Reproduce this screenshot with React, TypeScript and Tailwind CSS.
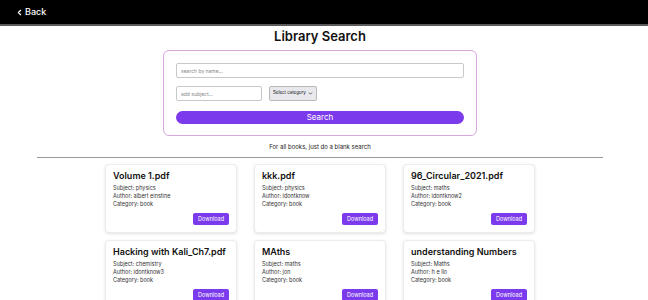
import { ChevronDown, ChevronLeft } from "lucide-react";

type Book = {
  name: string;
  subject: string;
  author: string;
  category: string;
};

const BOOKS: Book[] = [
  { name: "Volume 1.pdf", subject: "physics", author: "albert einstine", category: "book" },
  { name: "kkk.pdf", subject: "physics", author: "idontknow", category: "book" },
  { name: "96_Circular_2021.pdf", subject: "maths", author: "idontknow2", category: "book" },
  { name: "Hacking with Kali_Ch7.pdf", subject: "chemistry", author: "idontknow3", category: "book" },
  { name: "MAths", subject: "maths", author: "jon", category: "book" },
  { name: "understanding Numbers", subject: "Maths", author: "h e llo", category: "book" },
];

function BookCard({ book }: { book: Book }) {
  return (
    <div className="w-[132px] h-[69px] rounded-[4px] bg-white border border-[#ececec] shadow-[0_1px_3px_rgba(0,0,0,0.12)] px-[7px] pt-[5px] flex flex-col">
      <div className="text-[9px] leading-[12px] font-semibold text-[#111] truncate">{book.name}</div>
      <div className="mt-[2px] text-[5.5px] leading-[8px] text-[#333]">
        <div>Subject: {book.subject}</div>
        <div>Author: {book.author}</div>
        <div>Category: {book.category}</div>
      </div>
      <div className="flex justify-end mt-[5px]">
        <button className="w-[36px] h-[12px] rounded-[2px] bg-[#7c3aed] text-white text-[5.5px] leading-[12px]">
          Download
        </button>
      </div>
    </div>
  );
}

export default function App() {
  return (
    <div className="h-screen overflow-hidden bg-white" style={{ fontFamily: "Inter, 'Noto Sans', sans-serif" }}>
      <header className="h-[26px] bg-black border-b-2 border-[#5a5a5a] flex items-center pl-[15px]">
        <button className="flex items-center gap-[1px] text-white text-[9px] font-medium">
          <ChevronLeft className="w-[9px] h-[9px]" strokeWidth={3} />
          Back
        </button>
      </header>

      <main className="w-[640px] flex flex-col items-center">
        <h1 className="text-[13px] leading-[20px] font-semibold text-[#111]">Library Search</h1>

        <div className="mt-[4px] w-[314px] h-[86px] border border-[#d7a6dc] rounded-[6px] px-[12px] pt-[12px] flex flex-col">
          <input
            placeholder="search by name..."
            className="w-full h-[15px] border border-[#c8c8c8] rounded-[2px] px-[4px] text-[5px] placeholder:text-[#888] outline-none"
          />
          <div className="mt-[8px] flex gap-[7px]">
            <input
              placeholder="add subject..."
              className="w-[86px] h-[15px] border border-[#c8c8c8] rounded-[2px] px-[4px] text-[5px] placeholder:text-[#888] outline-none"
            />
            <div className="w-[48px] h-[15px] border border-[#b8b8b8] rounded-[2px] bg-[#e9e9ed] flex items-center justify-between px-[3px] text-[4.4px] whitespace-nowrap text-[#111]">
              <span>Select category</span>
              <ChevronDown className="w-[5px] h-[5px] shrink-0" strokeWidth={3} />
            </div>
          </div>
          <button className="mt-[10px] w-full h-[13px] rounded-full bg-[#7c3aed] text-white text-[8px] leading-[13px]">
            Search
          </button>
        </div>

        <p className="mt-[6px] text-[6px] leading-[9px] text-[#222]">For all books, just do a blank search</p>

        <hr className="mt-[6px] w-[566px] border-t-[1.5px] border-[#9a9a9a]" />

        <div className="mt-[6px] grid grid-cols-3 gap-x-[17px] gap-y-[7px]">
          {BOOKS.map((b) => (
            <BookCard key={b.name} book={b} />
          ))}
        </div>
      </main>
    </div>
  );
}
